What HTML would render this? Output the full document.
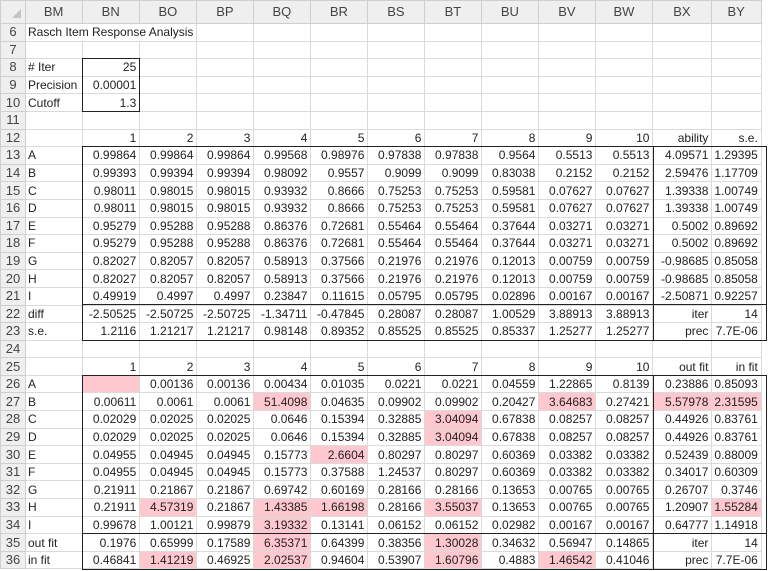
<!DOCTYPE html>
<html><head><meta charset="utf-8"><style>
html,body{margin:0;padding:0;background:#fff;width:768px;height:571px;overflow:hidden}
table{position:absolute;left:0;top:0;border-collapse:collapse;table-layout:fixed;font-family:"Liberation Sans",Arial,sans-serif;font-size:12px;color:#222}
td{border:1px solid #dadada;height:16.6px;padding:0 3px 0 2px;text-align:right;white-space:nowrap;overflow:visible;line-height:16px}
tr.h td{height:22px;background:#efefef;text-align:center;color:#444;font-size:13px;border-color:#cfcfcf}
td.n{background:#efefef;color:#444;text-align:center;padding:0;border-color:#cfcfcf;font-size:13px}
td.l{text-align:left}
td.p{background:#ffc7ce}
.b{position:absolute;border:1px solid #222;box-sizing:border-box}
.v{position:absolute;width:1px;background:#222}
.hz{position:absolute;height:1px;background:#222}
</style></head><body>
<table>
<colgroup><col style="width:25px"><col style="width:57px"><col style="width:57px"><col style="width:57px"><col style="width:57px"><col style="width:57px"><col style="width:57px"><col style="width:57px"><col style="width:57px"><col style="width:57px"><col style="width:57px"><col style="width:57px"><col style="width:59px"></colgroup>
<tr class="h"><td style="background:#efefef"></td><td>BM</td><td>BN</td><td>BO</td><td>BP</td><td>BQ</td><td>BR</td><td>BS</td><td>BT</td><td>BU</td><td>BV</td><td>BW</td><td>BX</td><td>BY</td></tr>
<tr><td class="n">6</td><td class="l" colspan="3">Rasch Item Response Analysis</td><td></td><td></td><td></td><td></td><td></td><td></td><td></td><td></td><td></td><td></td></tr>
<tr><td class="n">7</td><td></td><td></td><td></td><td></td><td></td><td></td><td></td><td></td><td></td><td></td><td></td><td></td><td></td></tr>
<tr><td class="n">8</td><td class="l"># Iter</td><td>25</td><td></td><td></td><td></td><td></td><td></td><td></td><td></td><td></td><td></td><td></td><td></td></tr>
<tr><td class="n">9</td><td class="l">Precision</td><td>0.00001</td><td></td><td></td><td></td><td></td><td></td><td></td><td></td><td></td><td></td><td></td><td></td></tr>
<tr><td class="n">10</td><td class="l">Cutoff</td><td>1.3</td><td></td><td></td><td></td><td></td><td></td><td></td><td></td><td></td><td></td><td></td><td></td></tr>
<tr><td class="n">11</td><td></td><td></td><td></td><td></td><td></td><td></td><td></td><td></td><td></td><td></td><td></td><td></td><td></td></tr>
<tr><td class="n">12</td><td></td><td>1</td><td>2</td><td>3</td><td>4</td><td>5</td><td>6</td><td>7</td><td>8</td><td>9</td><td>10</td><td>ability</td><td>s.e.</td></tr>
<tr><td class="n">13</td><td class="l">A</td><td>0.99864</td><td>0.99864</td><td>0.99864</td><td>0.99568</td><td>0.98976</td><td>0.97838</td><td>0.97838</td><td>0.9564</td><td>0.5513</td><td>0.5513</td><td>4.09571</td><td>1.29395</td></tr>
<tr><td class="n">14</td><td class="l">B</td><td>0.99393</td><td>0.99394</td><td>0.99394</td><td>0.98092</td><td>0.9557</td><td>0.9099</td><td>0.9099</td><td>0.83038</td><td>0.2152</td><td>0.2152</td><td>2.59476</td><td>1.17709</td></tr>
<tr><td class="n">15</td><td class="l">C</td><td>0.98011</td><td>0.98015</td><td>0.98015</td><td>0.93932</td><td>0.8666</td><td>0.75253</td><td>0.75253</td><td>0.59581</td><td>0.07627</td><td>0.07627</td><td>1.39338</td><td>1.00749</td></tr>
<tr><td class="n">16</td><td class="l">D</td><td>0.98011</td><td>0.98015</td><td>0.98015</td><td>0.93932</td><td>0.8666</td><td>0.75253</td><td>0.75253</td><td>0.59581</td><td>0.07627</td><td>0.07627</td><td>1.39338</td><td>1.00749</td></tr>
<tr><td class="n">17</td><td class="l">E</td><td>0.95279</td><td>0.95288</td><td>0.95288</td><td>0.86376</td><td>0.72681</td><td>0.55464</td><td>0.55464</td><td>0.37644</td><td>0.03271</td><td>0.03271</td><td>0.5002</td><td>0.89692</td></tr>
<tr><td class="n">18</td><td class="l">F</td><td>0.95279</td><td>0.95288</td><td>0.95288</td><td>0.86376</td><td>0.72681</td><td>0.55464</td><td>0.55464</td><td>0.37644</td><td>0.03271</td><td>0.03271</td><td>0.5002</td><td>0.89692</td></tr>
<tr><td class="n">19</td><td class="l">G</td><td>0.82027</td><td>0.82057</td><td>0.82057</td><td>0.58913</td><td>0.37566</td><td>0.21976</td><td>0.21976</td><td>0.12013</td><td>0.00759</td><td>0.00759</td><td>-0.98685</td><td>0.85058</td></tr>
<tr><td class="n">20</td><td class="l">H</td><td>0.82027</td><td>0.82057</td><td>0.82057</td><td>0.58913</td><td>0.37566</td><td>0.21976</td><td>0.21976</td><td>0.12013</td><td>0.00759</td><td>0.00759</td><td>-0.98685</td><td>0.85058</td></tr>
<tr><td class="n">21</td><td class="l">I</td><td>0.49919</td><td>0.4997</td><td>0.4997</td><td>0.23847</td><td>0.11615</td><td>0.05795</td><td>0.05795</td><td>0.02896</td><td>0.00167</td><td>0.00167</td><td>-2.50871</td><td>0.92257</td></tr>
<tr><td class="n">22</td><td class="l">diff</td><td>-2.50525</td><td>-2.50725</td><td>-2.50725</td><td>-1.34711</td><td>-0.47845</td><td>0.28087</td><td>0.28087</td><td>1.00529</td><td>3.88913</td><td>3.88913</td><td>iter</td><td>14</td></tr>
<tr><td class="n">23</td><td class="l">s.e.</td><td>1.2116</td><td>1.21217</td><td>1.21217</td><td>0.98148</td><td>0.89352</td><td>0.85525</td><td>0.85525</td><td>0.85337</td><td>1.25277</td><td>1.25277</td><td>prec</td><td>7.7E-06</td></tr>
<tr><td class="n">24</td><td></td><td></td><td></td><td></td><td></td><td></td><td></td><td></td><td></td><td></td><td></td><td></td><td></td></tr>
<tr><td class="n">25</td><td></td><td>1</td><td>2</td><td>3</td><td>4</td><td>5</td><td>6</td><td>7</td><td>8</td><td>9</td><td>10</td><td>out fit</td><td>in fit</td></tr>
<tr><td class="n">26</td><td class="l">A</td><td class="p"></td><td>0.00136</td><td>0.00136</td><td>0.00434</td><td>0.01035</td><td>0.0221</td><td>0.0221</td><td>0.04559</td><td>1.22865</td><td>0.8139</td><td>0.23886</td><td>0.85093</td></tr>
<tr><td class="n">27</td><td class="l">B</td><td>0.00611</td><td>0.0061</td><td>0.0061</td><td class="p">51.4098</td><td>0.04635</td><td>0.09902</td><td>0.09902</td><td>0.20427</td><td class="p">3.64683</td><td>0.27421</td><td class="p">5.57978</td><td class="p">2.31595</td></tr>
<tr><td class="n">28</td><td class="l">C</td><td>0.02029</td><td>0.02025</td><td>0.02025</td><td>0.0646</td><td>0.15394</td><td>0.32885</td><td class="p">3.04094</td><td>0.67838</td><td>0.08257</td><td>0.08257</td><td>0.44926</td><td>0.83761</td></tr>
<tr><td class="n">29</td><td class="l">D</td><td>0.02029</td><td>0.02025</td><td>0.02025</td><td>0.0646</td><td>0.15394</td><td>0.32885</td><td class="p">3.04094</td><td>0.67838</td><td>0.08257</td><td>0.08257</td><td>0.44926</td><td>0.83761</td></tr>
<tr><td class="n">30</td><td class="l">E</td><td>0.04955</td><td>0.04945</td><td>0.04945</td><td>0.15773</td><td class="p">2.6604</td><td>0.80297</td><td>0.80297</td><td>0.60369</td><td>0.03382</td><td>0.03382</td><td>0.52439</td><td>0.88009</td></tr>
<tr><td class="n">31</td><td class="l">F</td><td>0.04955</td><td>0.04945</td><td>0.04945</td><td>0.15773</td><td>0.37588</td><td>1.24537</td><td>0.80297</td><td>0.60369</td><td>0.03382</td><td>0.03382</td><td>0.34017</td><td>0.60309</td></tr>
<tr><td class="n">32</td><td class="l">G</td><td>0.21911</td><td>0.21867</td><td>0.21867</td><td>0.69742</td><td>0.60169</td><td>0.28166</td><td>0.28166</td><td>0.13653</td><td>0.00765</td><td>0.00765</td><td>0.26707</td><td>0.3746</td></tr>
<tr><td class="n">33</td><td class="l">H</td><td>0.21911</td><td class="p">4.57319</td><td>0.21867</td><td class="p">1.43385</td><td class="p">1.66198</td><td>0.28166</td><td class="p">3.55037</td><td>0.13653</td><td>0.00765</td><td>0.00765</td><td>1.20907</td><td class="p">1.55284</td></tr>
<tr><td class="n">34</td><td class="l">I</td><td>0.99678</td><td>1.00121</td><td>0.99879</td><td class="p">3.19332</td><td>0.13141</td><td>0.06152</td><td>0.06152</td><td>0.02982</td><td>0.00167</td><td>0.00167</td><td>0.64777</td><td>1.14918</td></tr>
<tr><td class="n">35</td><td class="l">out fit</td><td>0.1976</td><td>0.65999</td><td>0.17589</td><td class="p">6.35371</td><td>0.64399</td><td>0.38356</td><td class="p">1.30028</td><td>0.34632</td><td>0.56947</td><td>0.14865</td><td>iter</td><td>14</td></tr>
<tr><td class="n">36</td><td class="l">in fit</td><td>0.46841</td><td class="p">1.41219</td><td>0.46925</td><td class="p">2.02537</td><td>0.94604</td><td>0.53907</td><td class="p">1.60796</td><td>0.4883</td><td class="p">1.46542</td><td>0.41046</td><td>prec</td><td>7.7E-06</td></tr>
</table>
<div class="b" style="left:82px;top:58px;width:58px;height:54px"></div>
<div class="b" style="left:82px;top:146px;width:685px;height:195px"></div>
<div class="v" style="left:653px;top:146px;height:195px"></div>
<div class="hz" style="left:82px;top:304px;width:685px"></div>
<div class="b" style="left:82px;top:375px;width:685px;height:195px"></div>
<div class="v" style="left:653px;top:375px;height:195px"></div>
<div class="hz" style="left:82px;top:533px;width:685px"></div>
<div style="position:absolute;left:12px;top:9px;width:0;height:0;border-left:9px solid transparent;border-bottom:9px solid #c4c4c4"></div>
</body></html>
